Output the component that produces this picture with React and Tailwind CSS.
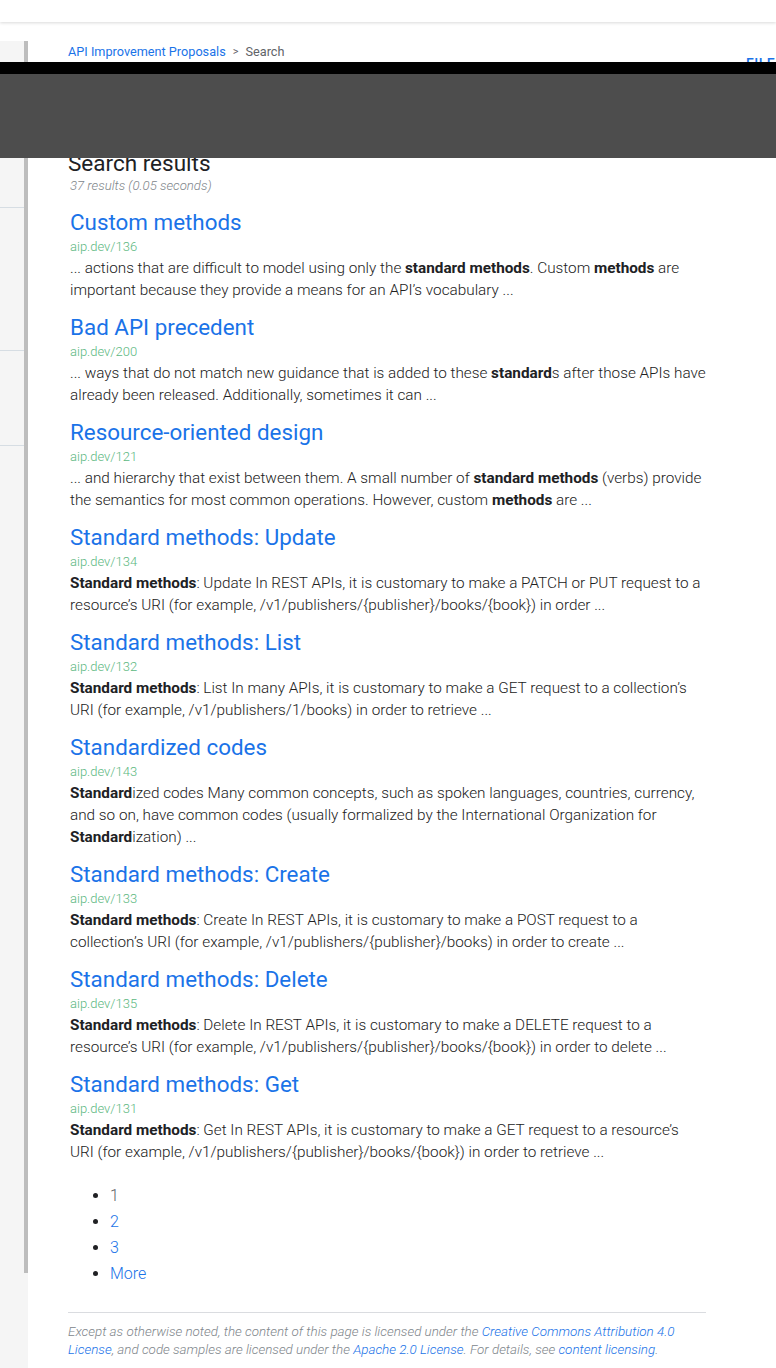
const results = [
  {
    title: "Custom methods",
    url: "aip.dev/136",
    snippet: (
      <>
        ... actions that are difficult to model using only the <b>standard methods</b>. Custom <b>methods</b> are
        <br />
        important because they provide a means for an API’s vocabulary ...
      </>
    ),
  },
  {
    title: "Bad API precedent",
    url: "aip.dev/200",
    snippet: (
      <>
        ... ways that do not match new guidance that is added to these <b>standard</b>s after those APIs have
        <br />
        already been released. Additionally, sometimes it can ...
      </>
    ),
  },
  {
    title: "Resource-oriented design",
    url: "aip.dev/121",
    snippet: (
      <>
        ... and hierarchy that exist between them. A small number of <b>standard methods</b> (verbs) provide
        <br />
        the semantics for most common operations. However, custom <b>methods</b> are ...
      </>
    ),
  },
  {
    title: "Standard methods: Update",
    url: "aip.dev/134",
    snippet: (
      <>
        <b>Standard methods</b>: Update In REST APIs, it is customary to make a PATCH or PUT request to a
        <br />
        resource’s URI (for example, /v1/publishers/{"{publisher}"}/books/{"{book}"}) in order ...
      </>
    ),
  },
  {
    title: "Standard methods: List",
    url: "aip.dev/132",
    snippet: (
      <>
        <b>Standard methods</b>: List In many APIs, it is customary to make a GET request to a collection’s
        <br />
        URI (for example, /v1/publishers/1/books) in order to retrieve ...
      </>
    ),
  },
  {
    title: "Standardized codes",
    url: "aip.dev/143",
    snippet: (
      <>
        <b>Standard</b>ized codes Many common concepts, such as spoken languages, countries, currency,
        <br />
        and so on, have common codes (usually formalized by the International Organization for
        <br />
        <b>Standard</b>ization) ...
      </>
    ),
  },
  {
    title: "Standard methods: Create",
    url: "aip.dev/133",
    snippet: (
      <>
        <b>Standard methods</b>: Create In REST APIs, it is customary to make a POST request to a
        <br />
        collection’s URI (for example, /v1/publishers/{"{publisher}"}/books) in order to create ...
      </>
    ),
  },
  {
    title: "Standard methods: Delete",
    url: "aip.dev/135",
    snippet: (
      <>
        <b>Standard methods</b>: Delete In REST APIs, it is customary to make a DELETE request to a
        <br />
        resource’s URI (for example, /v1/publishers/{"{publisher}"}/books/{"{book}"}) in order to delete ...
      </>
    ),
  },
  {
    title: "Standard methods: Get",
    url: "aip.dev/131",
    snippet: (
      <>
        <b>Standard methods</b>: Get In REST APIs, it is customary to make a GET request to a resource’s
        <br />
        URI (for example, /v1/publishers/{"{publisher}"}/books/{"{book}"}) in order to retrieve ...
      </>
    ),
  },
];

export default function App() {
  return (
    <div className="relative w-[776px] h-[1368px] overflow-hidden bg-white font-['Roboto',sans-serif]">
      {/* top bar */}
      <div className="h-[22px] bg-white shadow-[0_1px_3px_rgba(0,0,0,0.15)] relative z-10" />

      <div className="flex h-[1346px] pt-[19px]">
        {/* left nav */}
        <aside className="w-[24px] bg-[#f5f5f5] shrink-0">
          <div className="h-[167px] border-b border-[#d6dde3]" />
          <div className="h-[143px] border-b border-[#d6dde3]" />
          <div className="h-[95px] border-b border-[#d6dde3]" />
        </aside>
        <div className="w-[4px] shrink-0 bg-[#f5f5f5] flex flex-col">
          <div className="h-[1232px] bg-[#bdbdbd]" />
        </div>

        {/* main */}
        <main className="flex-1 pl-[40px] pr-[50px] relative">
          <nav className="flex items-center gap-[7px] text-[12.7px] leading-[20px] pt-[1px]">
            <span className="text-[#1a73e8]">API Improvement Proposals</span>
            <span className="text-[#5f6368] text-[11px]">&gt;</span>
            <span className="text-[#5f6368]">Search</span>
          </nav>

          <h1 className="mt-[87px] text-[22.5px] leading-[28px] text-[#202124] font-normal">Search results</h1>
          <div className="text-[13.2px] leading-[20px] font-light italic text-[#80868b] pl-[2px] mt-[-1px]">
            37 results (0.05 seconds)
          </div>

          <div className="pl-[2px] mt-[11px] flex flex-col gap-[11px]">
            {results.map((r) => (
              <div key={r.url}>
                <div className="text-[22.4px] leading-[30px] text-[#1a73e8]">{r.title}</div>
                <div className="text-[13px] leading-[20px] font-light text-[#5cb87f]">{r.url}</div>
                <p className="text-[15.3px] leading-[22px] font-light text-[#212121] whitespace-nowrap [&_b]:text-[#202124] [&_b]:font-bold">
                  {r.snippet}
                </p>
              </div>
            ))}
          </div>

          <ul className="mt-[20px] pl-[42px] list-disc text-[16px] leading-[26px] font-light marker:text-[#202124]">
            <li className="text-[#5f6368]">1</li>
            <li className="text-[#1a73e8]">2</li>
            <li className="text-[#1a73e8]">3</li>
            <li className="text-[#1a73e8]">More</li>
          </ul>

          <footer className="mt-[25px] w-[638px] border-t border-[#dadce0] pt-[10px] text-[13.4px] leading-[18px] font-light italic text-[#80868b] whitespace-nowrap">
            Except as otherwise noted, the content of this page is licensed under the{" "}
            <span className="text-[#1a73e8]">Creative Commons Attribution 4.0</span>
            <br />
            <span className="text-[#1a73e8]">License</span>, and code samples are licensed under the{" "}
            <span className="text-[#1a73e8]">Apache 2.0 License</span>. For details, see{" "}
            <span className="text-[#1a73e8]">content licensing</span>.
          </footer>

          <div className="absolute left-[718px] top-[15px] text-[14px] leading-[16px] font-medium tracking-[0.5px] text-[#1a73e8]">
            FILE
          </div>
        </main>
      </div>

      {/* dark overlay band */}
      <div className="absolute left-0 right-0 top-[62px] h-[96px] flex flex-col z-20">
        <div className="h-[12px] bg-black" />
        <div className="flex-1 bg-[#4d4d4d]" />
      </div>
    </div>
  );
}
